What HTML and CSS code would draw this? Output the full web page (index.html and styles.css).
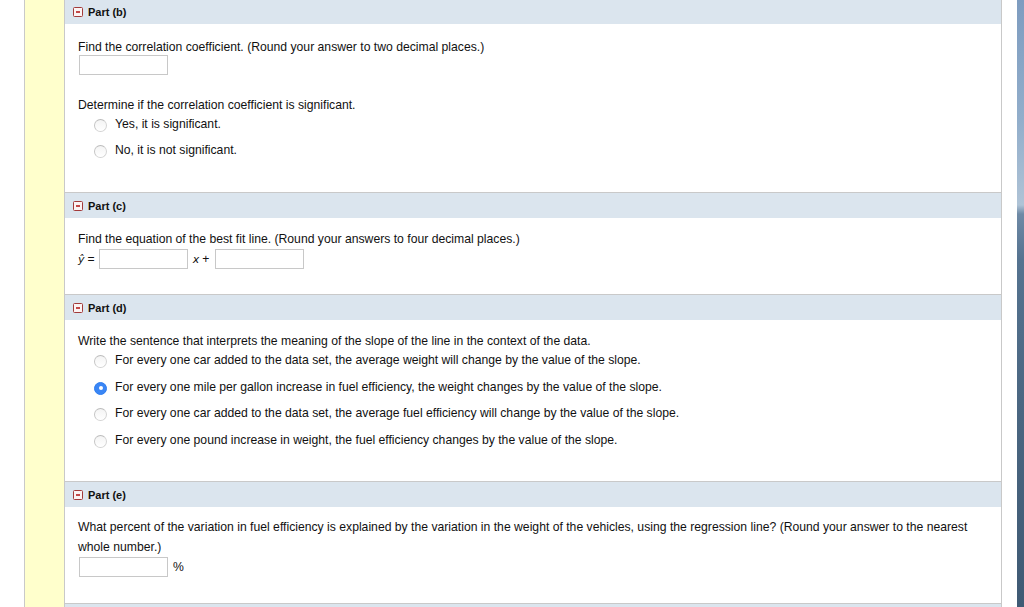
FILE: index.html
```html
<!DOCTYPE html>
<html>
<head>
<meta charset="utf-8">
<link rel="stylesheet" href="styles.css">
</head>
<body>
<div class="page">
  <div class="gutter"></div>
  <div class="sidebar"></div>
  <div class="main">
    <section class="part part-first">
      <div class="part-head first"><span class="toggle"></span><span class="part-title">Part (b)</span></div>
      <div class="part-body body-b">
        <p class="q">Find the correlation coefficient. (Round your answer to two decimal places.)</p>
        <div class="answer-row"><span class="box"></span></div>
        <p class="q q-second">Determine if the correlation coefficient is significant.</p>
        <div class="choices choices-b">
          <div class="choice"><span class="radio"></span><span>Yes, it is significant.</span></div>
          <div class="choice"><span class="radio"></span><span>No, it is not significant.</span></div>
        </div>
      </div>
    </section>
    <section class="part">
      <div class="part-head"><span class="toggle"></span><span class="part-title">Part (c)</span></div>
      <div class="part-body body-c">
        <p class="q">Find the equation of the best fit line. (Round your answers to four decimal places.)</p>
        <div class="answer-row eq-row"><span class="var">ŷ</span><span class="eq">=</span><span class="box"></span><span class="var xvar">x</span><span class="plus">+</span><span class="box"></span></div>
      </div>
    </section>
    <section class="part">
      <div class="part-head"><span class="toggle"></span><span class="part-title">Part (d)</span></div>
      <div class="part-body body-d">
        <p class="q">Write the sentence that interprets the meaning of the slope of the line in the context of the data.</p>
        <div class="choices choices-d">
          <div class="choice"><span class="radio"></span><span>For every one car added to the data set, the average weight will change by the value of the slope.</span></div>
          <div class="choice"><span class="radio checked"></span><span>For every one mile per gallon increase in fuel efficiency, the weight changes by the value of the slope.</span></div>
          <div class="choice"><span class="radio"></span><span>For every one car added to the data set, the average fuel efficiency will change by the value of the slope.</span></div>
          <div class="choice"><span class="radio"></span><span>For every one pound increase in weight, the fuel efficiency changes by the value of the slope.</span></div>
        </div>
      </div>
    </section>
    <section class="part">
      <div class="part-head"><span class="toggle"></span><span class="part-title">Part (e)</span></div>
      <div class="part-body body-e">
        <p class="q q-wrap">What percent of the variation in fuel efficiency is explained by the variation in the weight of the vehicles, using the regression line? (Round your answer to the nearest whole number.)</p>
        <div class="answer-row"><span class="box"></span><span class="pct">%</span></div>
      </div>
    </section>
    <section class="part">
      <div class="part-head"></div>
    </section>
  </div>
  <div class="gap"></div>
  <div class="desktop"></div>
</div>
</body>
</html>
```
FILE: styles.css
```css
html, body {
  margin: 0;
  padding: 0;
  background: #ffffff;
}
body {
  font-family: "Liberation Sans", Arial, Helvetica, sans-serif;
  font-size: 12.2px;
  color: #111;
  overflow: hidden;
}
.page {
  display: flex;
  height: 607px;
  overflow: hidden;
}
.gutter {
  width: 24px;
  flex: none;
}
.sidebar {
  width: 39px;
  flex: none;
  background: #ffffcc;
  border-left: 1px solid #c9c9c9;
  border-right: 1px solid #c9c9c9;
}
.main {
  width: 936px;
  flex: none;
  border-right: 1px solid #c9c9c9;
  display: flex;
  flex-direction: column;
}
.gap {
  width: 15px;
  flex: none;
}
.desktop {
  flex: 1;
  background: linear-gradient(180deg, #7e9cc0 0px, #92aecb 120px, #afc3d6 205px, #6f8aa6 214px, #557390 260px, #4b6782 400px, #3f5a74 607px);
}
.part + .part {
  border-top: 1px solid #c9c9c9;
}
.part-head {
  height: 25px;
  background: #dbe5ee;
  display: flex;
  align-items: center;
  padding-left: 8px;
  gap: 5px;
  font-size: 11px;
}
.part-head.first {
  height: 24px;
}
.toggle {
  width: 8px;
  height: 8px;
  border: 1px solid #a23a3a;
  border-radius: 1.5px;
  background: #fbf3f3;
  position: relative;
  flex: none;
}
.toggle::after {
  content: "";
  position: absolute;
  left: 2px;
  top: 3px;
  width: 4px;
  height: 2px;
  background: #c24848;
}
.part-title {
  font-weight: bold;
  color: #111;
}
.part-body {
  background: #fff;
  padding-left: 13px;
}
.q {
  margin: 0;
  line-height: 16px;
}
.body-b {
  height: 168px;
  padding-top: 15px;
  box-sizing: border-box;
}
.body-c {
  height: 76px;
  padding-top: 13px;
  box-sizing: border-box;
}
.body-d {
  height: 161px;
  padding-top: 13px;
  box-sizing: border-box;
}
.body-e {
  height: 96px;
  padding-top: 10px;
  box-sizing: border-box;
}
.q-wrap {
  line-height: 20px;
  padding-right: 20px;
}
.answer-row {
  display: flex;
  align-items: center;
  height: 20px;
  padding-left: 1px;
}
.box {
  width: 87px;
  height: 18px;
  border: 1px solid #c8c8c8;
  background: #fff;
  flex: none;
}
.eq-row {
  margin-top: 2px;
  padding-left: 0;
}
.var {
  font-style: italic;
  font-family: "DejaVu Sans", "Liberation Sans", sans-serif;
  font-size: 11px;
}
.eq {
  margin-left: 3px;
  margin-right: 4px;
}
.xvar {
  margin-left: 5px;
}
.plus {
  margin-left: 3px;
  margin-right: 6px;
}
.pct {
  margin-left: 5px;
}
.q-second {
  margin-top: 23px;
  line-height: 14px;
}
.choices {
  padding-left: 16px;
}
.choices-b {
  margin-top: -1px;
}
.choice {
  height: 26px;
  display: flex;
  align-items: center;
  gap: 8px;
}
.choices-d .choice {
  height: 26.5px;
}
.choices-d {
  margin-top: -2px;
}
.radio {
  width: 11px;
  height: 11px;
  border-radius: 50%;
  border: 1px solid #d4d4d4;
  border-top-color: #bcbcbc;
  border-left-color: #c4c4c4;
  background: linear-gradient(180deg, #f4f4f4, #ffffff);
  position: relative;
  flex: none;
  margin-top: 3px;
}
.radio.checked {
  border-color: #2f7ef0;
  background: #3a86f5;
}
.radio.checked::after {
  content: "";
  position: absolute;
  left: 3.5px;
  top: 3.5px;
  width: 4px;
  height: 4px;
  border-radius: 50%;
  background: #fff;
}
```
